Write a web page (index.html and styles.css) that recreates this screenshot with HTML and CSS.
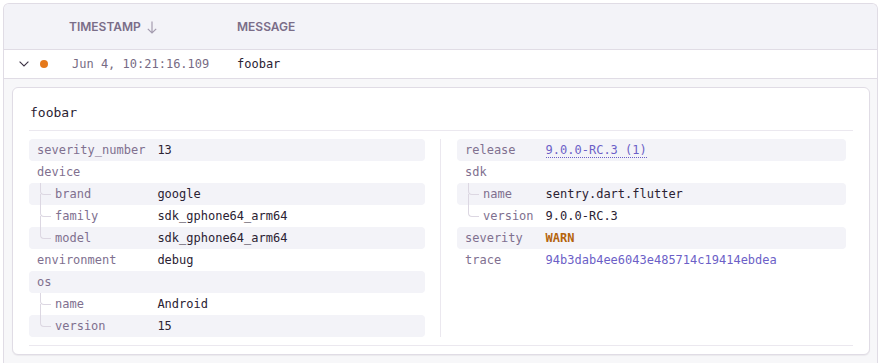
FILE: index.html
```html
<!DOCTYPE html>
<html lang="en">
<head>
    <meta charset="UTF-8">
    <title>Logs</title>
    <link rel="stylesheet" href="styles.css">
</head>
<body>
    <div class="panel">
        <div class="log-head">
            <div></div>
            <div class="head-cell">Timestamp
                <svg class="sort-arrow" width="10" height="13" viewBox="0 0 10 13">
                    <path d="M5 0.5V12M0.8 7.8L5 12L9.2 7.8" fill="none" stroke="#a59db0" stroke-width="1.2"/>
                </svg>
            </div>
            <div class="head-cell">Message</div>
        </div>

        <div class="log-row">
            <div class="row-lead">
                <svg class="chevron" width="10" height="6" viewBox="0 0 10 6">
                    <path d="M0.6 0.6L5 5L9.4 0.6" fill="none" stroke="#3e3446" stroke-width="1.1"/>
                </svg>
                <span class="level-dot"></span>
            </div>
            <div class="row-time">Jun 4, 10:21:16.109</div>
            <div class="row-msg">foobar</div>
        </div>

        <div class="row-detail">
            <div class="detail-card">
                <div class="detail-title">foobar</div>
                <div class="attr-cols">
                    <table class="attrs">
                        <tr class="striped"><td class="key">severity_number</td><td class="val">13</td></tr>
                        <tr><td class="key">device</td><td class="val"></td></tr>
                        <tr class="striped"><td class="key child">brand</td><td class="val">google</td></tr>
                        <tr><td class="key child">family</td><td class="val">sdk_gphone64_arm64</td></tr>
                        <tr class="striped"><td class="key child last">model</td><td class="val">sdk_gphone64_arm64</td></tr>
                        <tr><td class="key">environment</td><td class="val">debug</td></tr>
                        <tr class="striped"><td class="key">os</td><td class="val"></td></tr>
                        <tr><td class="key child">name</td><td class="val">Android</td></tr>
                        <tr class="striped"><td class="key child last">version</td><td class="val">15</td></tr>
                    </table>
                    <div class="attr-right">
                        <table class="attrs">
                            <tr class="striped"><td class="key">release</td><td class="val"><span class="release-link">9.0.0-RC.3 (1)</span></td></tr>
                            <tr><td class="key">sdk</td><td class="val"></td></tr>
                            <tr class="striped"><td class="key child">name</td><td class="val">sentry.dart.flutter</td></tr>
                            <tr><td class="key child last">version</td><td class="val">9.0.0-RC.3</td></tr>
                            <tr class="striped"><td class="key">severity</td><td class="val warn">WARN</td></tr>
                            <tr><td class="key">trace</td><td class="val trace">94b3dab4ee6043e485714c19414ebdea</td></tr>
                        </table>
                    </div>
                </div>
                <div class="detail-foot"></div>
            </div>
        </div>
    </div>
</body>
</html>
```

FILE: styles.css
```css
* {
    box-sizing: border-box;
    margin: 0;
    padding: 0;
}

body {
    background: #ffffff;
    padding: 3px 4px 0 3px;
    height: 100vh;
    overflow: hidden;
    font-family: Inter, 'Noto Sans', sans-serif;
    color: #2b2233;
}

/* panel keeps going below the fold, so no bottom border */
.panel {
    border: 1px solid #e0dce5;
    border-bottom: 0;
    border-radius: 6px 6px 0 0;
    height: 100%;
    background: #f7f7f9;
    overflow: hidden;
}

.log-head,
.log-row {
    display: grid;
    grid-template-columns: 65px 168px 1fr;
    align-items: center;
}

.log-head {
    height: 46px;
    background: #f3f3f8;
    border-bottom: 1px solid #e0dce5;
}

.head-cell {
    display: flex;
    align-items: center;
    gap: 6px;
    font-size: 12px;
    font-weight: 600;
    text-transform: uppercase;
    color: #7a6d88;
}

.sort-arrow {
    margin-top: 2px;
}

.log-row {
    height: 29px;
    background: #ffffff;
    border-bottom: 1px solid #e0dce5;
    font-family: 'DejaVu Sans Mono', 'Liberation Mono', monospace;
    font-size: 12px;
}

.row-lead {
    display: flex;
    align-items: center;
    padding-left: 15px;
}

.chevron {
    display: block;
}

.level-dot {
    width: 8px;
    height: 8px;
    border-radius: 50%;
    background: #e5791b;
    margin-left: 11px;
}

.row-time {
    padding-left: 3px;
    color: #776b84;
}

.row-msg {
    color: #2b2233;
}

.row-detail {
    padding: 8px 7px 0 8px;
}

.detail-card {
    background: #ffffff;
    border: 1px solid #e0dce5;
    border-radius: 6px;
    box-shadow: 0 1px 1px rgba(43, 34, 51, 0.06);
    padding: 15px 16px 8px;
    font-family: 'DejaVu Sans Mono', 'Liberation Mono', monospace;
    font-size: 12px;
}

.detail-title {
    font-size: 13px;
    line-height: 20px;
    padding-left: 1px;
    padding-bottom: 7px;
    border-bottom: 1px solid #ebe8ef;
}

.attr-cols {
    display: grid;
    grid-template-columns: 396px 1fr;
    column-gap: 15px;
    margin-top: 8px;
}

.attr-right {
    border-left: 1px solid #ebe8ef;
    padding: 0 7px 0 16px;
}

.attrs {
    width: 100%;
    border-collapse: separate;
    border-spacing: 0;
}

.attrs td {
    height: 22px;
    line-height: 22px;
    white-space: nowrap;
    padding: 0;
}

.attrs tr.striped td {
    background: #f3f3f8;
}

.attrs td:first-child {
    border-radius: 4px 0 0 4px;
}

.attrs td:last-child {
    border-radius: 0 4px 4px 0;
}

.key {
    width: 1px;
    padding: 0 12px 0 8px !important;
    color: #80708f;
}

.key.child {
    position: relative;
    padding-left: 26px !important;
}

.key.child::before {
    content: '';
    position: absolute;
    left: 11px;
    top: 0;
    width: 10px;
    height: 11px;
    border-left: 1px solid #dcd7e2;
    border-bottom: 1px solid #dcd7e2;
    border-bottom-left-radius: 4px;
}

.key.child::after {
    content: '';
    position: absolute;
    left: 11px;
    top: 11px;
    bottom: 0;
    border-left: 1px solid #dcd7e2;
}

.key.child.last::after {
    display: none;
}

.val {
    color: #2b2233;
}

.release-link {
    color: #6c5fc7;
    border-bottom: 1px dotted #6c5fc7;
}

.warn {
    color: #b5640c;
    font-weight: bold;
}

.trace {
    color: #6c5fc7;
}

.detail-foot {
    margin-top: 8px;
    border-top: 1px solid #ebe8ef;
}
```
